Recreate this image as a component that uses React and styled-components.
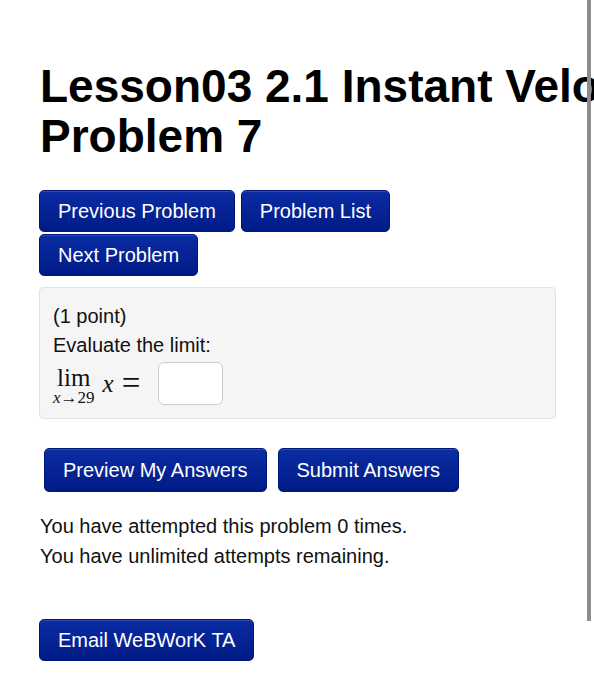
import React from "react";
import styled, { createGlobalStyle } from "styled-components";

const GlobalStyle = createGlobalStyle`
  html, body {
    margin: 0;
    padding: 0;
    background: #fff;
    overflow: hidden;
  }
  body {
    font-family: "Liberation Sans", Arial, Helvetica, sans-serif;
    color: #111;
  }
`;

const Page = styled.div`
  position: relative;
  width: 594px;
  height: 700px;
  overflow: hidden;
  padding: 61px 0 0 39px;
  box-sizing: border-box;
`;

const ScrollLine = styled.div`
  position: absolute;
  left: 587px;
  top: 0;
  width: 4px;
  height: 621px;
  background: #8c8c8c;
`;

const Title = styled.h1`
  margin: 0;
  width: 760px;
  padding-left: 1px;
  font-size: 46px;
  line-height: 50px;
  font-weight: bold;
  color: #000;
`;

const NavRow = styled.div`
  display: flex;
  flex-wrap: wrap;
  gap: 2px 6px;
  width: 380px;
  margin-top: 29px;
`;

const Button = styled.button`
  height: ${(p) => p.h || 42}px;
  padding: 0 18px;
  border: 1px solid #00167a;
  border-radius: 5px;
  background: linear-gradient(#0b2ca3, #001b86);
  color: #fff;
  font-family: "Liberation Sans", Arial, Helvetica, sans-serif;
  font-size: 20px;
  cursor: pointer;
  box-shadow: inset 0 1px 0 rgba(255, 255, 255, 0.15);
`;

const ProblemBox = styled.div`
  width: 517px;
  box-sizing: border-box;
  margin-top: 11px;
  padding: 14px 13px 12px;
  background: #f5f5f5;
  border: 1px solid #e3e3e3;
  border-radius: 4px;
  font-size: 20px;
  line-height: 29px;
`;

const MathRow = styled.div`
  display: flex;
  align-items: center;
  font-family: "Liberation Serif", "DejaVu Serif", serif;
`;

const Lim = styled.div`
  display: inline-flex;
  flex-direction: column;
  align-items: center;
  margin: 6px 0 0 0;
`;

const LimWord = styled.span`
  font-size: 25px;
  line-height: 24px;
`;

const LimSub = styled.span`
  font-size: 17px;
  line-height: 16px;
  white-space: nowrap;
`;

const Var = styled.i`
  font-size: ${(p) => p.size || 25}px;
  margin-left: ${(p) => p.gap || 0}px;
`;

const Equals = styled.span`
  font-size: 33px;
  line-height: 1;
  margin: 0 18px 0 8px;
`;

const AnswerInput = styled.input`
  width: 65px;
  height: 43px;
  box-sizing: border-box;
  border: 1px solid #cccccc;
  border-radius: 6px;
  background: #fff;
`;

const SubmitRow = styled.div`
  display: flex;
  gap: 11px;
  margin: 29px 0 0 5px;
`;

const Info = styled.p`
  margin: 19px 0 0;
  font-size: 20px;
  line-height: 30px;
  padding-left: 1px;
`;

const Footer = styled.div`
  margin-top: 48px;
`;

export default function App() {
  return (
    <>
      <GlobalStyle />
      <Page>
        <ScrollLine />
        <Title>Lesson03 2.1 Instant Velocity Problem 7</Title>
        <NavRow>
          <Button>Previous Problem</Button>
          <Button>Problem List</Button>
          <Button>Next Problem</Button>
        </NavRow>
        <ProblemBox>
          <div>(1 point)</div>
          <div>Evaluate the limit:</div>
          <MathRow>
            <Lim>
              <LimWord>lim</LimWord>
              <LimSub>
                <Var size={17}>x</Var>→29
              </LimSub>
            </Lim>
            <Var gap={8}>x</Var>
            <Equals>=</Equals>
            <AnswerInput type="text" />
          </MathRow>
        </ProblemBox>
        <SubmitRow>
          <Button h={44}>Preview My Answers</Button>
          <Button h={44}>Submit Answers</Button>
        </SubmitRow>
        <Info>
          You have attempted this problem 0 times.
          <br />
          You have unlimited attempts remaining.
        </Info>
        <Footer>
          <Button>Email WeBWorK TA</Button>
        </Footer>
      </Page>
    </>
  );
}
